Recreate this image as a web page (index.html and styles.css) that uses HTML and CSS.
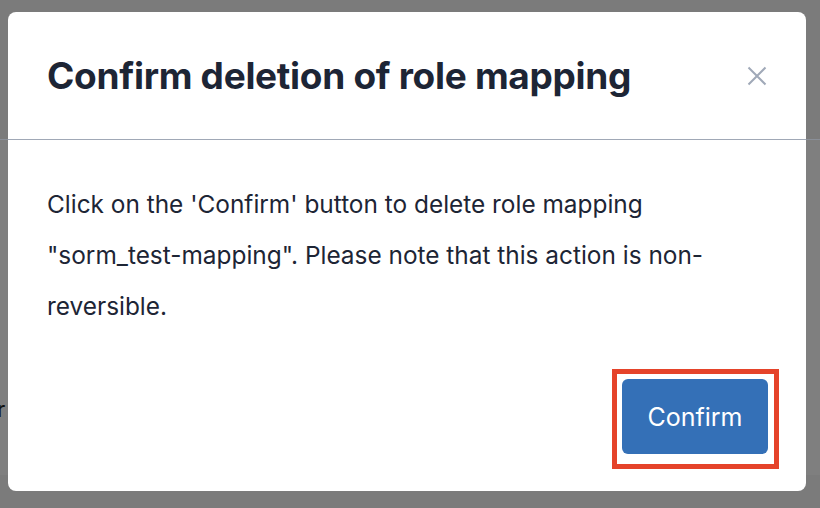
FILE: index.html
```html
<!DOCTYPE html>
<html>
<head>
<meta charset="utf-8">
<link rel="stylesheet" href="styles.css">
</head>
<body>
<div class="page">
  <div class="page-top"></div>
  <div class="page-main"><span class="page-text">r</span></div>
  <div class="modal">
    <div class="modal-header">
      <h2 class="modal-title">Confirm deletion of role mapping</h2>
      <button class="close-btn" aria-label="Close">
        <svg width="20" height="20" viewBox="0 0 20 20"><path d="M1.5 1.5 L18.5 18.5 M18.5 1.5 L1.5 18.5" stroke="#a0a9b8" stroke-width="2" fill="none"/></svg>
      </button>
    </div>
    <div class="modal-body">
      <p>Click on the 'Confirm' button to delete role mapping "sorm_test-mapping". Please note that this action is non-reversible.</p>
    </div>
    <div class="modal-footer">
      <div class="highlight">
        <button class="confirm-btn">Confirm</button>
      </div>
    </div>
  </div>
</div>
</body>
</html>
```

FILE: styles.css
```css
html, body {
  margin: 0;
  padding: 0;
}
body {
  width: 820px;
  height: 508px;
  overflow: hidden;
  font-family: Inter, "Noto Sans", sans-serif;
}
.page {
  position: relative;
  width: 820px;
  height: 508px;
  background: #7b7b7b;
  display: flex;
  flex-direction: column;
}
.page-top {
  height: 140px;
  border-bottom: 1px solid #8a8f98;
  box-sizing: border-box;
}
.page-main {
  height: 335px;
  background: #7f7f7f;
  position: relative;
}
.page-text {
  position: absolute;
  left: -3px;
  top: 256px;
  font-size: 22px;
  color: #111;
}
.modal {
  position: absolute;
  left: 8px;
  top: 12px;
  width: 798px;
  height: 479px;
  background: #fff;
  border-radius: 8px;
  display: flex;
  flex-direction: column;
}
.modal-header {
  height: 128px;
  box-sizing: border-box;
  border-bottom: 1px solid #a0a8b6;
  display: flex;
  align-items: center;
  justify-content: space-between;
  padding: 0 39px 0 39px;
}
.modal-title {
  margin: 0;
  font-size: 37px;
  font-weight: 700;
  color: #1d2535;
  letter-spacing: -0.3px;
}
.close-btn {
  background: none;
  border: 0;
  padding: 0;
  width: 20px;
  height: 20px;
  display: flex;
}
.modal-body {
  padding: 39px 39px 0 39px;
  flex: 1;
}
.modal-body p {
  margin: 0;
  font-size: 24.4px;
  line-height: 51px;
  color: #1d2535;
}
.modal-footer {
  display: flex;
  justify-content: flex-end;
  padding: 0 27px 22px 0;
}
.highlight {
  border: 5px solid #e5432a;
  padding: 5px 6px 10px 5px;
}
.confirm-btn {
  display: block;
  width: 146px;
  height: 75px;
  background: #3470b7;
  border: 0;
  border-radius: 6px;
  color: #fff;
  font-family: Inter, "Noto Sans", sans-serif;
  font-size: 25px;
  font-weight: 400;
}
```
